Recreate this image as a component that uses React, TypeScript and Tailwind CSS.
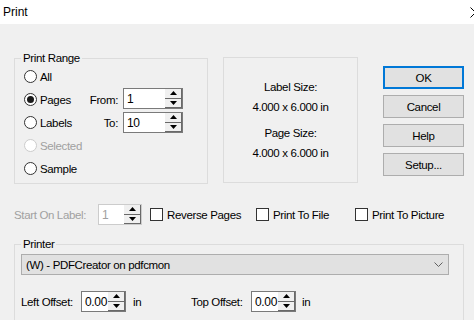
import React from "react";

function SpinArrows() {
  return (
    <div className="flex h-full w-[17px] flex-col">
      <div className="flex flex-1 items-center justify-center border-b border-r border-[#696969] bg-[#f0f0f0]">
        <svg width="7" height="4" viewBox="0 0 7 4">
          <path d="M3.5 0 L7 4 L0 4 Z" fill="#000" />
        </svg>
      </div>
      <div className="flex flex-1 items-center justify-center border-b border-r border-[#696969] bg-[#f0f0f0]">
        <svg width="7" height="4" viewBox="0 0 7 4">
          <path d="M0 0 L7 0 L3.5 4 Z" fill="#000" />
        </svg>
      </div>
    </div>
  );
}

function Spinner({ value, width, disabled }: { value: string; width: string; disabled?: boolean }) {
  return (
    <div
      className={`flex h-[21px] items-stretch border bg-white ${width} ${
        disabled ? "border-[#cccccc] bg-[#f0f0f0] text-[#a0a0a0]" : "border-[#7a7a7a] text-black"
      }`}
    >
      <span className="flex flex-1 items-center pl-[3px] text-[12px] leading-none">{value}</span>
      <SpinArrows />
    </div>
  );
}

function Radio({ label, checked, disabled }: { label: string; checked?: boolean; disabled?: boolean }) {
  return (
    <div className={`flex items-center ${disabled ? "text-[#a0a0a0]" : "text-black"}`}>
      <span
        className={`flex h-[13px] w-[13px] items-center justify-center rounded-full border bg-white ${
          disabled ? "border-[#cccccc]" : "border-[#333333]"
        }`}
      >
        {checked && <span className="h-[7px] w-[7px] rounded-full bg-[#1a1a1a]" />}
      </span>
      <span className="ml-[3px]">{label}</span>
    </div>
  );
}

function Check({ label, width }: { label: string; width: string }) {
  return (
    <div className={`flex items-center ${width}`}>
      <span className="h-[13px] w-[13px] border border-[#333333] bg-white" />
      <span className="ml-[4px]">{label}</span>
    </div>
  );
}

function Button({ label, focused }: { label: string; focused?: boolean }) {
  return (
    <div
      className={`flex h-[23px] w-[81px] items-center justify-center bg-[#e1e1e1] ${
        focused ? "border-2 border-[#0078d7]" : "border border-[#adadad]"
      }`}
    >
      {label}
    </div>
  );
}

export default function App() {
  return (
    <div className="h-[320px] w-[474px] overflow-hidden bg-[#f0f0f0] font-['Liberation_Sans',Arial,sans-serif] text-[11.5px] leading-[14px] tracking-[-0.35px] text-black">
      <div className="flex h-[24px] items-center justify-between bg-white pl-[3px]">
        <span className="text-[12px] tracking-normal">Print</span>
        <svg width="11" height="11" viewBox="0 0 11 11" className="mr-[-7px]">
          <path d="M0.5 0.5 L10.5 10.5 M10.5 0.5 L0.5 10.5" stroke="#000" strokeWidth="1" />
        </svg>
      </div>

      <div className="pl-[14px] pt-[27px]">
        <div className="flex items-start">
          <fieldset className="h-[133px] w-[194px] border border-[#dcdcdc] pl-[9px] pr-[24px]">
            <legend className="-ml-[3px] px-[2px] leading-[14px]">Print Range</legend>
            <div className="flex h-[23px] items-center">
              <Radio label="All" />
            </div>
            <div className="flex h-[23px] items-center">
              <Radio label="Pages" checked />
              <span className="ml-auto w-[30px] text-right">From:</span>
              <div className="ml-[5px] self-start">
                <Spinner value="1" width="w-[60px]" />
              </div>
            </div>
            <div className="flex h-[23px] items-center">
              <Radio label="Labels" />
              <span className="ml-auto w-[30px] text-right">To:</span>
              <div className="ml-[5px]">
                <Spinner value="10" width="w-[60px]" />
              </div>
            </div>
            <div className="flex h-[23px] items-center">
              <Radio label="Selected" disabled />
            </div>
            <div className="flex h-[23px] items-center">
              <Radio label="Sample" />
            </div>
          </fieldset>

          <div className="ml-[15px] mt-[6px] flex h-[126px] w-[135px] flex-col items-center border border-[#dcdcdc] pt-[19px]">
            <span className="h-[20px] leading-[20px]">Label Size:</span>
            <span className="h-[20px] leading-[20px]">4.000 x 6.000 in</span>
            <span className="mt-[6px] h-[20px] leading-[20px]">Page Size:</span>
            <span className="h-[20px] leading-[20px]">4.000 x 6.000 in</span>
          </div>

          <div className="ml-[25px] mt-[15px] flex flex-col gap-[6px]">
            <Button label="OK" focused />
            <Button label="Cancel" />
            <Button label="Help" />
            <Button label="Setup..." />
          </div>
        </div>

        <div className="mt-[20px] flex h-[21px] items-center">
          <span className="w-[84px] text-[#a0a0a0]">Start On Label:</span>
          <Spinner value="1" width="w-[44px]" disabled />
          <div className="ml-[8px] flex items-center">
            <Check label="Reverse Pages" width="w-[106px]" />
            <Check label="Print To File" width="w-[99px]" />
            <Check label="Print To Picture" width="w-[110px]" />
          </div>
        </div>

        <fieldset className="mt-[12px] h-[100px] w-[450px] border border-[#dcdcdc] pl-[6px]">
          <legend className="px-[2px] leading-[14px]">Printer</legend>
          <div className="mt-[3px] flex h-[21px] w-[428px] items-center justify-between border border-[#adadad] bg-[#e1e1e1] pl-[4px] pr-[5px]">
            <span>(W) - PDFCreator on pdfcmon</span>
            <svg width="9" height="5" viewBox="0 0 9 5">
              <path d="M0.5 0.5 L4.5 4.5 L8.5 0.5" fill="none" stroke="#606060" strokeWidth="1" />
            </svg>
          </div>
          <div className="mt-[16px] flex h-[21px] items-center">
            <span className="w-[60px]">Left Offset:</span>
            <Spinner value="0.00" width="w-[45px]" />
            <span className="ml-[7px] w-[58px]">in</span>
            <span className="w-[60px]">Top Offset:</span>
            <Spinner value="0.00" width="w-[45px]" />
            <span className="ml-[6px]">in</span>
          </div>
        </fieldset>
      </div>
    </div>
  );
}
